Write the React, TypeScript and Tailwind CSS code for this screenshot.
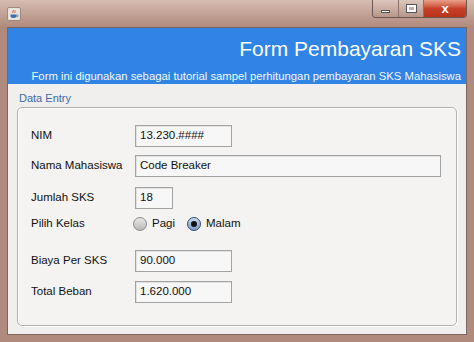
import React from 'react';

const font = { fontFamily: '"Liberation Sans", Arial, sans-serif' };

interface FieldProps {
  label: string;
  value: string;
  width: string;
  className?: string;
}

const Field = ({ label, value, width, className = '' }: FieldProps) => (
  <div className={`flex items-center ${className}`}>
    <div className="w-[104px] text-[11.5px] text-[#111]">{label}</div>
    <div
      className={`${width} h-[22px] border border-[#a3a3a3] bg-[#f7f7f7] px-[4px] flex items-center text-[11.5px] text-[#111] shadow-[inset_1px_1px_0_#e2e2e2]`}
    >
      {value}
    </div>
  </div>
);

const Radio = ({ label, checked }: { label: string; checked?: boolean }) => (
  <div className="flex items-center gap-[5px]">
    {checked ? (
      <span className="w-[14px] h-[14px] rounded-full border border-[#2e4a6e] bg-gradient-to-b from-[#c9dcf0] to-[#7d9cc0] flex items-center justify-center">
        <span className="w-[6px] h-[6px] rounded-full bg-[#111]" />
      </span>
    ) : (
      <span className="w-[14px] h-[14px] rounded-full border border-[#8a8a8a] bg-gradient-to-b from-[#e8e8e8] to-[#b9b9b9]" />
    )}
    <span className="text-[11.5px] text-[#111]">{label}</span>
  </div>
);

export default function App() {
  return (
    <div
      className="w-[474px] h-[342px] bg-[#b08a7d] flex flex-col px-[7px] pb-[7px] overflow-hidden"
      style={font}
    >
      {/* title bar */}
      <div className="h-[27px] flex items-start justify-between shrink-0 bg-gradient-to-b from-[#d6bcb1] to-[#b08a7d] -mx-[7px] px-[7px]">
        <div className="mt-[7px] w-[14px] h-[14px] rounded-[2px] bg-[#e9e2dc] border border-[#9c8a80] flex items-center justify-center">
          <svg width="10" height="10" viewBox="0 0 10 10">
            <path d="M4 1c1 1-1 2 0 3M6 1.5c.8.8-.8 1.6 0 2.5" stroke="#d0402a" strokeWidth="0.9" fill="none" />
            <path d="M1.5 5.5h6v1.5c0 1.3-1 2-3 2s-3-.7-3-2z" fill="#3a6db5" />
            <path d="M7.5 6h1a.8.8 0 010 1.6h-1" stroke="#3a6db5" strokeWidth="0.7" fill="none" />
          </svg>
        </div>
        <div className="flex h-[18px] rounded-b-[4px] overflow-hidden border border-t-0 border-[#6b5550]">
          <div className="w-[26px] bg-gradient-to-b from-[#dcc6bd] to-[#b8978b] flex items-center justify-center border-r border-[#8a716a]">
            <span className="w-[9px] h-[3px] bg-white border border-[#555] mt-[5px]" />
          </div>
          <div className="w-[25px] bg-gradient-to-b from-[#dcc6bd] to-[#b8978b] flex items-center justify-center border-r border-[#8a716a]">
            <span className="w-[9px] h-[7px] border-[2px] border-white outline outline-1 outline-[#555]" />
          </div>
          <div className="w-[42px] bg-gradient-to-b from-[#e8a08a] via-[#c8412a] to-[#b8321c] flex items-center justify-center">
            <span className="text-white text-[13px] font-bold leading-none">x</span>
          </div>
        </div>
      </div>

      {/* client area */}
      <div className="flex-1 bg-[#f1efee] border border-[#7a6560] flex flex-col">
        <div className="h-[56px] bg-[#2f84e6] flex flex-col items-end pr-[5px] shrink-0">
          <div className="text-[21px] text-white leading-none mt-[10px]">Form Pembayaran SKS</div>
          <div className="text-[11.3px] text-[#f4f8ff] leading-none mt-[12px]">
            Form ini digunakan sebagai tutorial sampel perhitungan pembayaran SKS Mahasiswa
          </div>
        </div>

        <div className="text-[11px] text-[#3c6aa6] leading-none mt-[9px] ml-[11px]">Data Entry</div>

        <div className="mx-[9px] mt-[3px] h-[219px] rounded-[5px] border border-[#b3b0ae] bg-[#f4f3f2] shadow-[inset_1px_1px_0_#ffffff,1px_1px_0_#ffffff] pl-[13px] pt-[17px]">
          <Field label="NIM" value="13.230.####" width="w-[97px]" />
          <Field label="Nama Mahasiswa" value="Code Breaker" width="w-[306px]" className="mt-[8px]" />
          <Field label="Jumlah SKS" value="18" width="w-[38px]" className="mt-[10px]" />
          <div className="flex items-center mt-[5px] h-[20px]">
            <div className="w-[104px] text-[11.5px] text-[#111]">Pilih Kelas</div>
            <div className="flex items-center gap-[12px] -ml-[2px]">
              <Radio label="Pagi" />
              <Radio label="Malam" checked />
            </div>
          </div>
          <Field label="Biaya Per SKS" value="90.000" width="w-[97px]" className="mt-[16px]" />
          <Field label="Total Beban" value="1.620.000" width="w-[97px]" className="mt-[9px]" />
        </div>
      </div>
    </div>
  );
}
